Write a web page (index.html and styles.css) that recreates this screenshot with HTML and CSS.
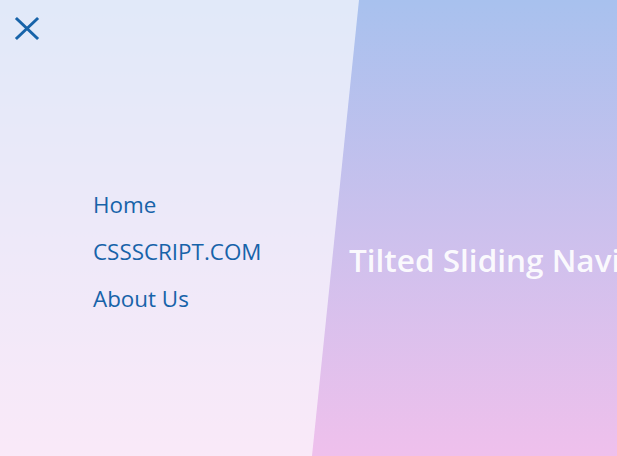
FILE: index.html
```html
<!DOCTYPE html>
<html>
<head>
<meta charset="utf-8">
<link rel="stylesheet" href="styles.css">
</head>
<body>
<div class="page">
  <nav class="panel">
    <button class="close" aria-label="Close">
      <svg width="26" height="26" viewBox="0 0 26 26"><path d="M3 3 L23 22 M23 3 L3 22" stroke="#1763a9" stroke-width="3" stroke-linecap="square" fill="none"/></svg>
    </button>
    <ul class="menu">
      <li><a href="#">Home</a></li>
      <li><a href="#">CSSSCRIPT.COM</a></li>
      <li><a href="#">About Us</a></li>
    </ul>
  </nav>
  <main class="content">
    <h1 class="title">Tilted Sliding Navigation Menu</h1>
  </main>
</div>
</body>
</html>
```
FILE: styles.css
```css
html, body {
  margin: 0;
  padding: 0;
  height: 100%;
}
body {
  font-family: "Open Sans", "Noto Sans", sans-serif;
  overflow: hidden;
}
.page {
  position: relative;
  width: 617px;
  height: 456px;
  background: linear-gradient(to bottom, #a8c1ee 0%, #efc0ec 100%);
  display: flex;
  overflow: hidden;
}
.panel {
  position: absolute;
  left: 0;
  top: 0;
  width: 360px;
  height: 456px;
  background: rgba(255, 255, 255, 0.65);
  clip-path: polygon(0 0, 359px 0, 312px 100%, 0 100%);
  z-index: 2;
}
.close {
  position: absolute;
  left: 14px;
  top: 16px;
  width: 26px;
  height: 26px;
  padding: 0;
  border: 0;
  background: none;
  display: block;
}
.close svg { display: block; }
.menu {
  list-style: none;
  margin: 0;
  padding: 190px 0 0 93px;
  display: flex;
  flex-direction: column;
  gap: 17px;
}
.menu a {
  color: #1763a9;
  text-decoration: none;
  font-size: 22.4px;
  line-height: 30px;
  display: block;
}
.content {
  flex: 1;
  display: flex;
  align-items: center;
  min-width: 0;
}
.title {
  margin: 0 0 0 349px;
  padding-top: 66px;
  padding-bottom: 0;
  color: rgba(255, 255, 255, 0.92);
  font-size: 31.5px;
  font-weight: 600;
  white-space: nowrap;
  line-height: 44px;
  position: relative;
  top: -1px;
}
```
